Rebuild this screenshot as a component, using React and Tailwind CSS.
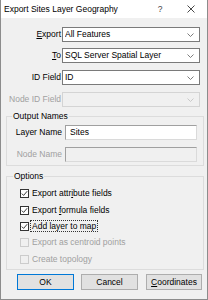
import React from 'react';

const Chevron = ({ disabled }) => (
  <svg width="7" height="4" viewBox="0 0 7 4" className="shrink-0">
    <path d="M0.5 0.5 L3.5 3.5 L6.5 0.5" fill="none" stroke={disabled ? '#c4c4c4' : '#6e6e6e'} strokeWidth="0.9" />
  </svg>
);

const Combo = ({ value, disabled }) => (
  <div
    className={`flex items-center h-[15px] w-[138px] pl-[2px] pr-[5px] border ${
      disabled ? 'border-[#d4d4d4] bg-[#f0f0f0]' : 'border-[#7a7a7a] bg-white'
    }`}
  >
    <span className="flex-1 leading-none truncate">{value}</span>
    <Chevron disabled={disabled} />
  </div>
);

const Row = ({ label, children, disabled, className }) => (
  <div className={`flex items-center ${className}`}>
    <div className={`w-[61px] pr-[1px] text-right leading-none ${disabled ? 'text-[#a0a0a0]' : ''}`}>{label}</div>
    {children}
  </div>
);

const Check = ({ checked, disabled, focused, children, className }) => (
  <div className={`flex items-center h-[12px] ${className}`}>
    <div
      className={`w-[9px] h-[9px] ml-[13px] mr-[2px] border flex items-center justify-center ${
        disabled ? 'border-[#cccccc] bg-[#f0f0f0]' : 'border-[#333333] bg-white'
      }`}
    >
      {checked && (
        <svg width="7" height="7" viewBox="0 0 7 7">
          <path d="M0.8 3.6 L2.6 5.4 L6.2 1.2" fill="none" stroke="#222" strokeWidth="0.9" />
        </svg>
      )}
    </div>
    <span
      className={`leading-none px-[1px] py-[1px] ${disabled ? 'text-[#a0a0a0]' : ''} ${
        focused ? 'outline outline-1 outline-dotted outline-[#333]' : ''
      }`}
    >
      {children}
    </span>
  </div>
);

const Button = ({ children, primary, className }) => (
  <button
    className={`h-[16px] leading-none bg-[#e1e1e1] border ${
      primary ? 'border-[#0078d7]' : 'border-[#adadad]'
    } ${className}`}
  >
    {children}
  </button>
);

export default function App() {
  return (
    <div className="w-[208px] h-[300px] bg-[#f0f0f0] border-l border-r border-b border-[#8c8c8c] font-['Liberation_Sans',sans-serif] text-[8.5px] text-black flex flex-col overflow-hidden">
      <div className="h-[18px] bg-white flex items-center pl-[3px] shrink-0">
        <span className="flex-1 leading-none">Export Sites Layer Geography</span>
        <span className="w-[10px] text-center text-[#444] mr-[22px]">?</span>
        <svg width="8" height="8" viewBox="0 0 8 8" className="mr-[12px]">
          <path d="M0.5 0.5 L7.5 7.5 M7.5 0.5 L0.5 7.5" stroke="#333" strokeWidth="0.9" />
        </svg>
      </div>

      <Row className="mt-[9px]" label={<><u>E</u>xport</>}>
        <Combo value="All Features" />
      </Row>
      <Row className="mt-[6px]" label={<><u>T</u>o</>}>
        <Combo value="SQL Server Spatial Layer" />
      </Row>
      <Row className="mt-[7px]" label="ID Field">
        <Combo value="ID" />
      </Row>
      <Row className="mt-[7px]" label="Node ID Field" disabled>
        <Combo value="" disabled />
      </Row>

      <fieldset className="ml-[5px] w-[198px] mt-[3px] h-[56px] border border-[#dcdcdc] px-0">
        <legend className="ml-[5px] px-[1px] leading-[12px]">Output Names</legend>
        <div className="flex items-center mt-[3px]">
          <div className="w-[55px] text-right leading-none">Layer Name</div>
          <div className="ml-[3px] w-[132px] h-[15px] bg-white border border-[#a0a0a0] border-r-[#dadada] border-b-[#dadada] flex items-center pl-[4px] leading-none">
            Sites
          </div>
        </div>
        <div className="flex items-center mt-[7px]">
          <div className="w-[55px] text-right leading-none text-[#a0a0a0]">Node Name</div>
          <div className="ml-[3px] w-[132px] h-[15px] bg-[#f0f0f0] border border-[#a0a0a0] border-r-[#dadada] border-b-[#dadada]" />
        </div>
      </fieldset>

      <fieldset className="ml-[5px] w-[198px] mt-[4px] h-[100px] border border-[#dcdcdc] px-0">
        <legend className="ml-[6px] px-[1px] leading-[12px]">Options</legend>
        <Check className="mt-[5px]" checked>
          Export attr<u>i</u>bute fields
        </Check>
        <Check className="mt-[5px]" checked>
          Export <u>f</u>ormula fields
        </Check>
        <Check className="mt-[4px]" checked focused>
          Add layer to map
        </Check>
        <Check className="mt-[4px]" disabled>
          Export as centroid points
        </Check>
        <Check className="mt-[5px]" disabled>
          Create topology
        </Check>
      </fieldset>

      <div className="flex mt-[4px] pl-[16px] gap-[7px]">
        <Button primary className="w-[57px]">OK</Button>
        <Button className="w-[57px]">Cancel</Button>
        <Button className="w-[56px] ml-[1px]">
          <u>C</u>oordinates
        </Button>
      </div>
    </div>
  );
}
